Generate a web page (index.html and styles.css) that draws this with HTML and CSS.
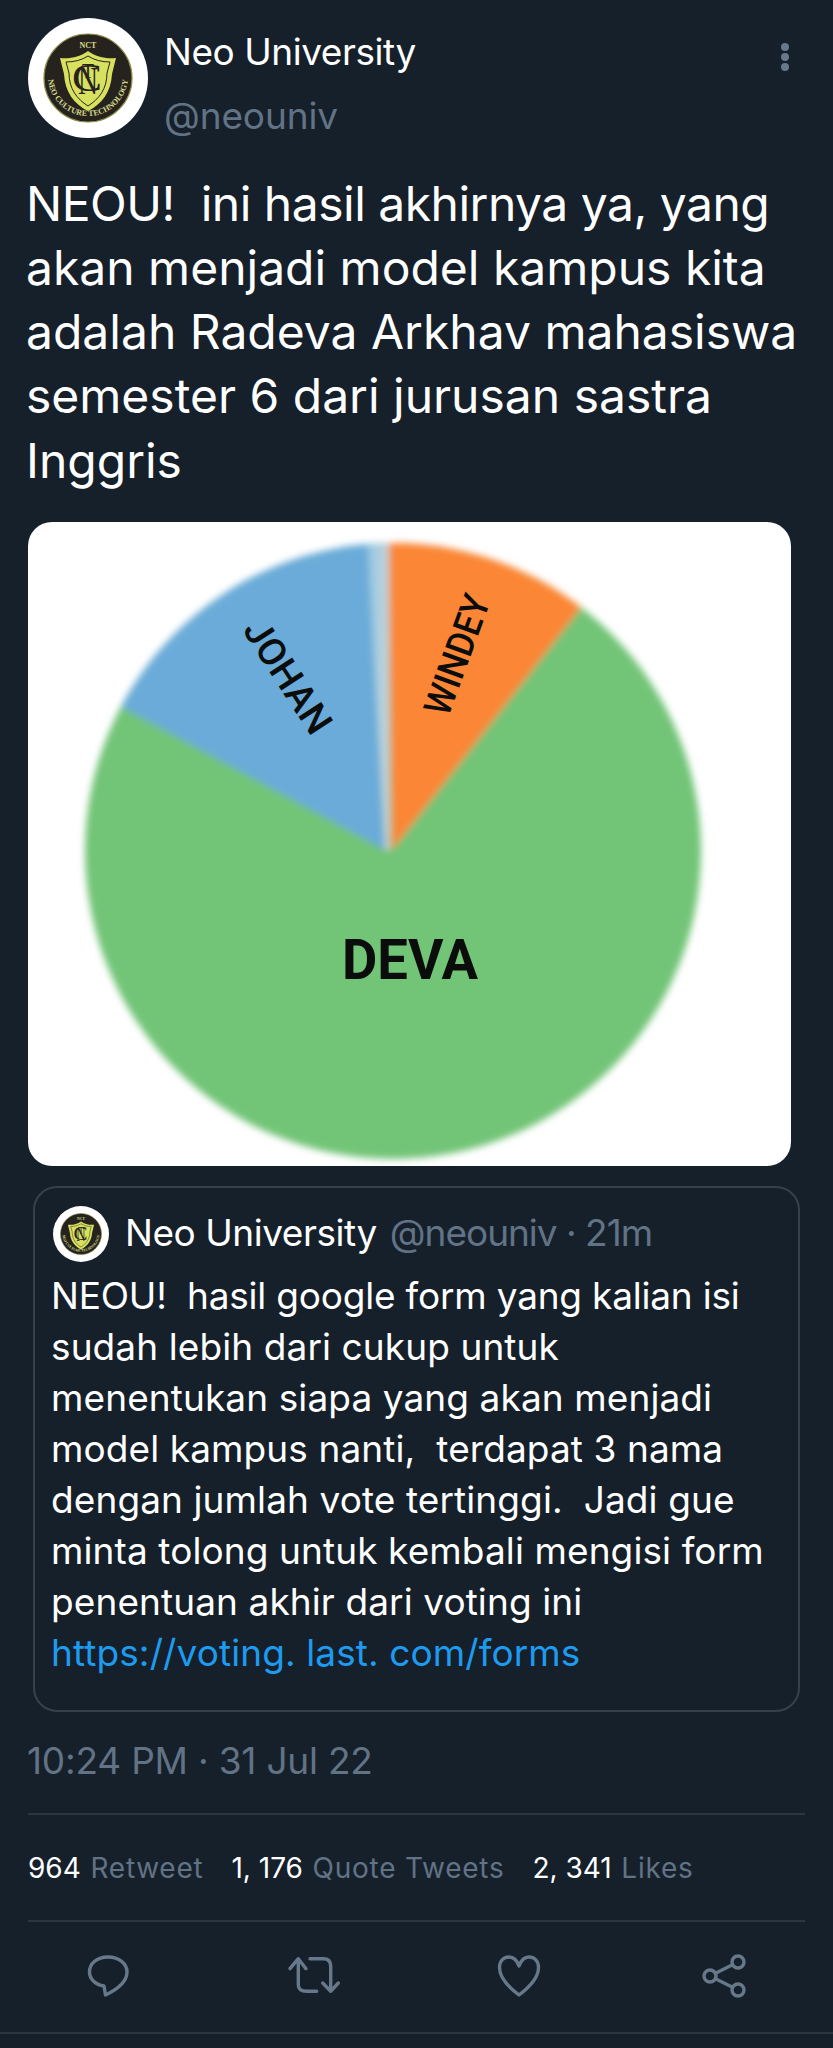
FILE: index.html
```html
<!DOCTYPE html>
<html lang="id">
<head>
<meta charset="utf-8">
<title>Neo University</title>
<link rel="stylesheet" href="styles.css">
</head>
<body>
<svg class="defs" width="0" height="0" aria-hidden="true">
  <defs>
    <symbol id="logo" viewBox="0 0 120 120">
      <circle cx="60" cy="60" r="60" fill="#fff"/>
      <circle cx="60" cy="60" r="44" fill="#26231f" stroke="#8a8a45" stroke-width="1.2"/>
      <path d="M60 93 C46 86 37 74 36 56 L32 40 C42 41 52 39 60 33 C68 39 78 41 88 40 L84 56 C83 74 74 86 60 93Z" fill="#d8e05f"/>
      <path d="M60 88 C49 81 41 71 41 55 L38 44 C46 44 54 42 60 38 C66 42 74 44 82 44 L79 55 C79 71 71 81 60 88Z" fill="none" stroke="#26231f" stroke-width="1"/>
      <text class="mono" x="50" y="76" font-size="40" textLength="20" lengthAdjust="spacingAndGlyphs">N</text>
      <text class="mono" x="44" y="73" font-size="40" textLength="30" lengthAdjust="spacingAndGlyphs">C</text>
      <text class="mono" x="54" y="60" font-size="22" textLength="12" lengthAdjust="spacingAndGlyphs">T</text>
      <path id="logoArc" d="M20 58 A40 40 0 0 0 100 58" fill="none"/>
      <text class="logo-text" font-size="8" fill="#d8dc8a"><textPath href="#logoArc" startOffset="50%" text-anchor="middle">NEO CULTURE TECHNOLOGY</textPath></text>
      <text class="logo-text" x="60" y="30" font-size="8" fill="#d8dc8a" text-anchor="middle">NCT</text>
    </symbol>
    <filter id="soft" x="-5%" y="-5%" width="110%" height="110%"><feGaussianBlur stdDeviation="3.6"/></filter>
    <clipPath id="pieClip"><ellipse cx="365" cy="329" rx="308" ry="308"/></clipPath>
    <linearGradient id="pale" x1="0" x2="1" y1="0" y2="0"><stop offset="0" stop-color="#8fc3e6"/><stop offset="0.8" stop-color="#bcd3dc"/><stop offset="1" stop-color="#d8c8b4"/></linearGradient>
  </defs>
</svg>
<main class="tweet">
  <header class="head">
    <svg class="avatar" viewBox="0 0 120 120" aria-hidden="true"><use href="#logo"/></svg>
    <div class="who">
      <div class="name">Neo University</div>
      <div class="handle">@neouniv</div>
    </div>
    <div class="more"><i></i><i></i><i></i></div>
  </header>
  <p class="text"><span class="lead">NEOU!&nbsp; ini hasil akhirnya ya, yang</span><br>akan menjadi model kampus kita<br>adalah Radeva Arkhav mahasiswa<br>semester 6 dari jurusan sastra<br>Inggris</p>
  <figure class="chart">
    <svg viewBox="0 0 763 644" aria-label="Diagram lingkaran">
      <rect width="763" height="644" fill="#fff"/>
      <g filter="url(#soft)">
        <g clip-path="url(#pieClip)">
          <rect width="763" height="644" fill="#72c477"/>
          <path d="M357 328 L94 185 L60 0 L338 0 Z" fill="#6aabd9"/>
          <path d="M357 328 L338 0 L361 0 L362 328 Z" fill="url(#pale)"/>
          <path d="M364 328 L361 0 L600 0 L551 88 Z" fill="#fb8636"/>
        </g>
      </g>
      <text class="pie-label" transform="translate(214 108) rotate(57)" font-size="38" textLength="128" lengthAdjust="spacingAndGlyphs">JOHAN</text>
      <text class="pie-label" transform="translate(420 196) rotate(-70)" font-size="38" textLength="125" lengthAdjust="spacingAndGlyphs">WINDEY</text>
      <text class="pie-label strong" x="314" y="457" font-size="55" textLength="136" lengthAdjust="spacingAndGlyphs">DEVA</text>
    </svg>
  </figure>
  <section class="quote">
    <div class="quote-head">
      <svg class="avatar-small" viewBox="0 0 120 120" aria-hidden="true"><use href="#logo"/></svg>
      <span class="quote-name">Neo University</span>
      <span class="quote-meta">@neouniv · 21m</span>
    </div>
    <p class="quote-text"><span class="quote-lead">NEOU!&nbsp; hasil google form yang kalian isi</span><br>sudah lebih dari cukup untuk<br>menentukan siapa yang akan menjadi<br>model kampus nanti,&nbsp; terdapat 3 nama<br>dengan jumlah vote tertinggi.&nbsp; Jadi gue<br>minta tolong untuk kembali mengisi form<br>penentuan akhir dari voting ini<br><span class="link">https://voting. last. com/forms</span></p>
  </section>
  <div class="time">10:24 PM · 31 Jul 22</div>
  <div class="stats">
    <span><b>964</b> Retweet</span>
    <span><b>1, 176</b> Quote Tweets</span>
    <span><b>2, 341</b> Likes</span>
  </div>
  <nav class="actions">
    <svg class="icon" viewBox="0 0 44 44" aria-label="Balas"><path d="M21 3 C10 3 2.5 9.5 2.5 18 C2.5 25 8.5 31 17 32 L18.5 41 C29 36 40 28 40 18 C40 9.5 32 3 21 3Z"/></svg>
    <svg class="icon wide" viewBox="0 0 54 44" aria-label="Retweet"><path d="M3 14.7 L11.3 4.7 L19 14.7 M11.3 4.7 V30.7 Q11.3 37.3 19.7 37.3 H29.7 M23 4.7 H36.3 Q43.7 4.7 43.7 12.3 V37.3 M35.7 29 L43.7 37.3 L51.3 29"/></svg>
    <svg class="icon" viewBox="0 0 44 44" aria-label="Suka"><path d="M22 41 C14 35 2.5 25 2.5 13.5 C2.5 6.5 7 3 12 3 C16.5 3 20 6.5 22 12 C24 6.5 27.5 3 32 3 C37 3 41.5 6.5 41.5 13.5 C41.5 25 30 35 22 41Z"/></svg>
    <svg class="icon share" viewBox="0 0 44 44" aria-label="Bagikan"><circle cx="36" cy="8" r="6"/><circle cx="8" cy="22" r="6"/><circle cx="36" cy="36" r="6"/><path d="M13.5 19.3 L30.5 10.7 M13.5 24.7 L30.5 33.3"/></svg>
  </nav>
</main>
</body>
</html>
```
FILE: styles.css
```css
* { box-sizing: border-box; }
html, body { margin: 0; background: #16202b; }
body { height: 2048px; overflow: hidden; font-family: "Inter", "Liberation Sans", sans-serif; color: #fff; }
.defs { position: absolute; }
.logo-text { font-family: "Liberation Serif", serif; font-weight: 700; }
.mono { font-family: "Liberation Serif", serif; fill: #26231f; }
.tweet { display: flex; flex-direction: column; padding: 18px 0 0; }
.head { display: flex; align-items: flex-start; padding: 0 28px; }
.avatar { width: 120px; height: 120px; flex: none; }
.who { flex: 1; padding: 11.5px 0 0 16px; }
.name { font-size: 37px; line-height: 44px; letter-spacing: -0.45px; }
.handle { font-size: 37px; line-height: 44px; margin-top: 20px; color: #617385; letter-spacing: -0.1px; }
.more { display: flex; flex-direction: column; gap: 2px; padding-top: 25px; margin-right: 16px; }
.more i { width: 8px; height: 8px; border-radius: 50%; background: #66788a; }
.text { margin: 33.5px 0 0; padding-left: 26px; font-size: 48px; line-height: 64.3px; white-space: nowrap; }
.lead { letter-spacing: -0.5px; }
.chart { margin: 29.5px 42px 0 28px; height: 644px; border-radius: 24px; overflow: hidden; }
.chart svg { display: block; width: 763px; height: 644px; }
.pie-label { font-family: "Roboto", sans-serif; font-weight: 500; fill: #0a0d0c; }
.pie-label.strong { font-weight: 700; }
.quote { margin: 20px 33px 0; height: 526px; border: 2px solid #35414d; border-radius: 24px; padding: 18px 18px 0; }
.quote-head { display: flex; align-items: center; height: 56px; white-space: nowrap; }
.avatar-small { width: 56px; height: 56px; flex: none; margin-right: 16px; }
.quote-name { font-size: 37px; margin-bottom: 4px; letter-spacing: -0.45px; }
.quote-meta { font-size: 37px; color: #617385; margin-left: 13px; margin-bottom: 4px; letter-spacing: -1px; }
.quote-text { margin: 8px 0 0 -2px; font-size: 37px; line-height: 51px; letter-spacing: 0.1px; white-space: nowrap; }
.quote-lead { letter-spacing: -0.2px; }
.link { color: #1d9bf0; }
.time { margin: 27px 0 0 27px; font-size: 37px; line-height: 44px; color: #617385; letter-spacing: -0.2px; }
.stats { display: flex; gap: 28px; margin: 30px 28px 0; height: 109px; border-top: 2px solid #2a3640; border-bottom: 2px solid #2a3640; align-items: center; font-size: 28px; letter-spacing: 0.75px; color: #617385; white-space: nowrap; }
.stats b { font-weight: 400; color: #fff; margin-right: 1px; letter-spacing: 0; }
.actions { display: flex; gap: 156px; align-items: center; height: 112px; padding: 0 0 2px 87px; border-bottom: 2px solid #2a3640; }
.icon { width: 44px; height: 44px; fill: none; stroke: #66788a; stroke-width: 3.4; stroke-linejoin: round; stroke-linecap: round; }
.icon.wide { width: 54px; }
.icon.share { margin-left: 5px; }
```
